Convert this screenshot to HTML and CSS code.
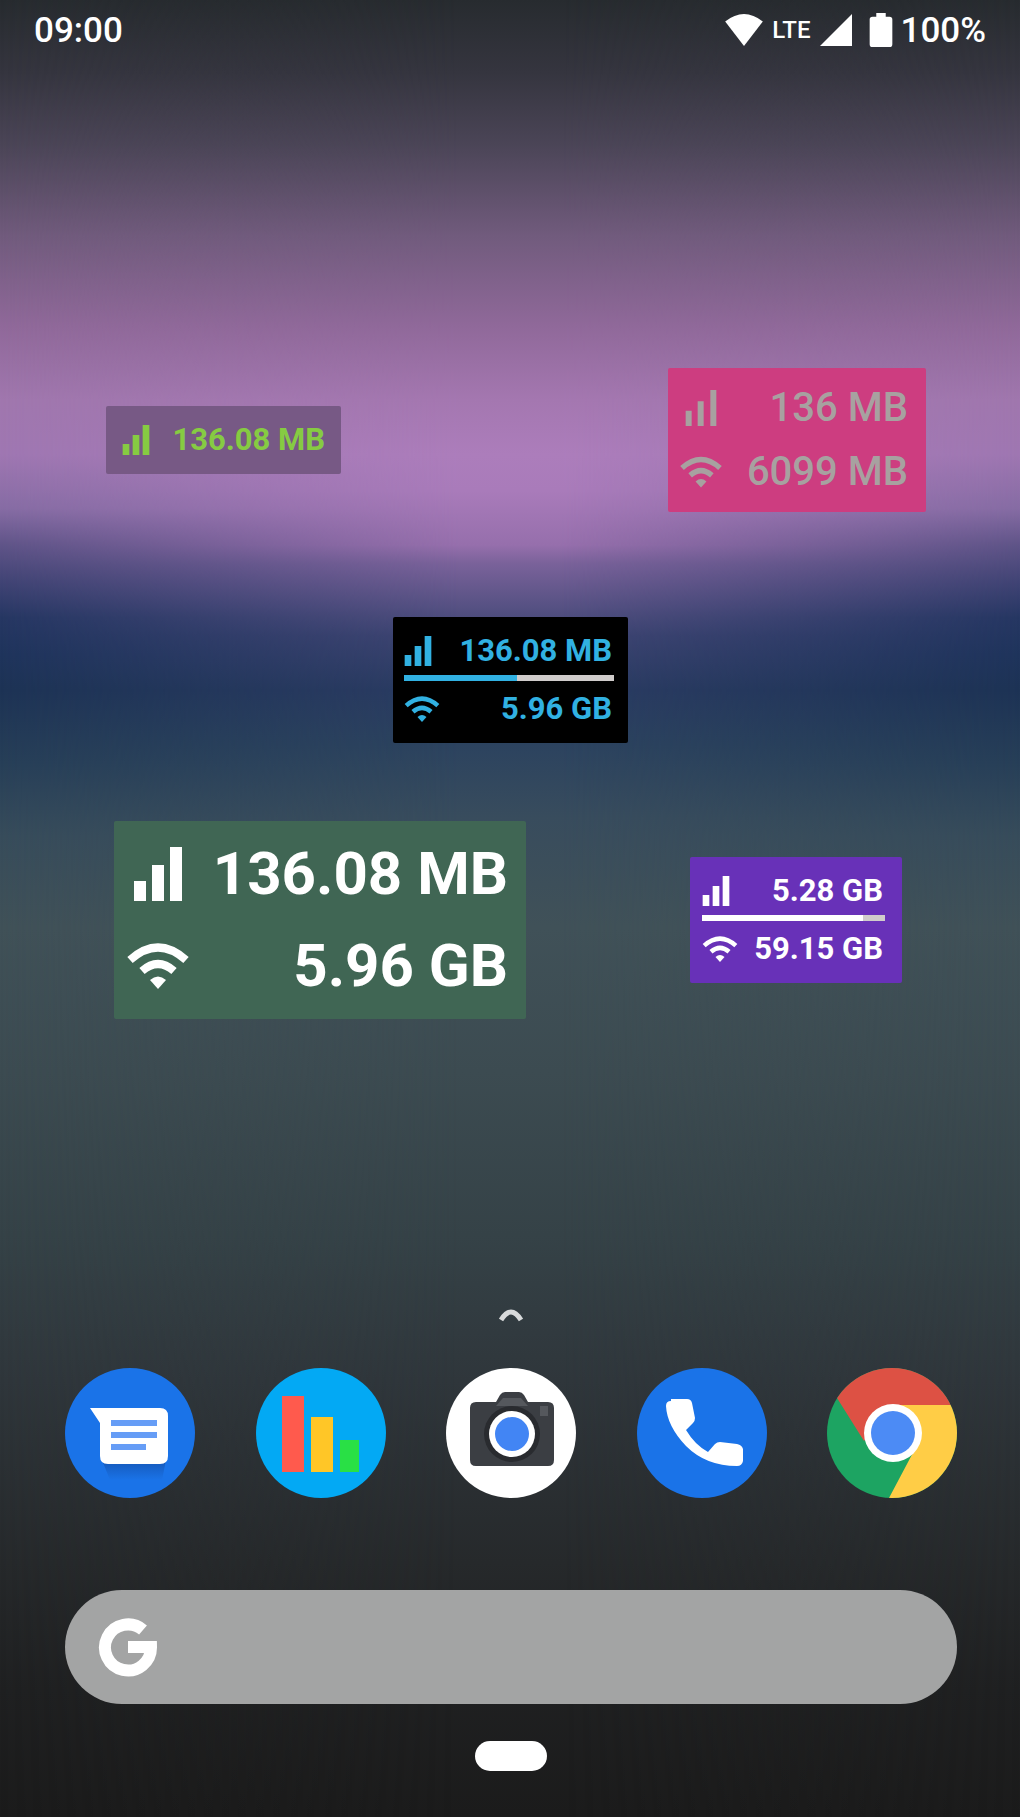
FILE: index.html
```
<!DOCTYPE html>
<html lang="en">
<head>
  <meta charset="UTF-8" />
  <meta name="viewport" content="width=device-width, initial-scale=1.0"/>
  <title>Home Screen - Data Usage Widgets</title>
  <link rel="stylesheet" href="styles.css">
</head>
<body>

  <!-- shared icons -->
  <svg class="sprite" aria-hidden="true">
    <symbol id="signal" viewBox="0 0 48 54">
      <path d="M0 34h12v20H0zM18 18h12v36H18zM36 0h12v54H36z"/>
    </symbol>
    <symbol id="signal-thin" viewBox="0 0 48 54">
      <path d="M1 31h9v23H1zM19 17h9v37h-9zM38 0h9v54h-9z"/>
    </symbol>
    <symbol id="wifi" viewBox="0 0 62 46">
      <path d="M3 17Q31-8 59 17M15 28Q31 14 47 28" fill="none" stroke="currentColor" stroke-width="8"/>
      <path d="M23 37q8-7 16 0l-8 9z"/>
    </symbol>
  </svg>

  <header class="status-bar">
    <span class="clock">09:00</span>
    <div class="status-icons">
      <svg width="40" height="32" viewBox="0 0 40 34"><path d="M0 8Q20-8 40 8L20 34z"/></svg>
      <span class="lte">LTE</span>
      <svg width="34" height="32" viewBox="0 0 34 34"><path d="M34 0v34H0z"/></svg>
      <svg class="battery" width="24" height="34" viewBox="0 0 24 36"><path d="M7 0h10v4h4q3 0 3 3v26q0 3-3 3H3q-3 0-3-3V7q0-3 3-3h4z"/></svg>
      <span class="percent">100%</span>
    </div>
  </header>

  <main class="widgets">
    <div class="widget-row row-top">
      <section class="widget small green-text">
        <div class="line"><svg class="icon"><use href="#signal"/></svg><span>136.08 MB</span></div>
      </section>
      <section class="widget medium pink">
        <div class="line"><svg class="icon"><use href="#signal-thin"/></svg><span>136 MB</span></div>
        <div class="line"><svg class="icon wifi"><use href="#wifi"/></svg><span>6099 MB</span></div>
      </section>
    </div>

    <section class="widget small black">
      <div class="line"><svg class="icon"><use href="#signal"/></svg><span>136.08 MB</span></div>
      <div class="bar"><div class="fill" style="width: 54%"></div></div>
      <div class="line"><svg class="icon wifi"><use href="#wifi"/></svg><span>5.96 GB</span></div>
    </section>

    <div class="widget-row row-bottom">
      <section class="widget large green">
        <div class="line"><svg class="icon"><use href="#signal"/></svg><span>136.08 MB</span></div>
        <div class="line"><svg class="icon wifi"><use href="#wifi"/></svg><span>5.96 GB</span></div>
      </section>
      <section class="widget small purple">
        <div class="line"><svg class="icon"><use href="#signal"/></svg><span>5.28 GB</span></div>
        <div class="bar"><div class="fill" style="width: 88%"></div></div>
        <div class="line"><svg class="icon wifi"><use href="#wifi"/></svg><span>59.15 GB</span></div>
      </section>
    </div>
  </main>

  <footer class="bottom">
    <button class="drawer" aria-label="Open app drawer">
      <svg width="24" height="16" viewBox="0 0 24 16"><path d="M2 13q5-8 10-8t10 8" fill="none" stroke="#d8dadb" stroke-width="5"/></svg>
    </button>

    <nav class="dock">
      <a href="#" aria-label="Messages">
        <svg viewBox="0 0 130 130">
          <defs>
            <linearGradient id="shade" x1="0" y1="0" x2="0" y2="1">
              <stop offset="0" stop-color="#1558b8"/>
              <stop offset="1" stop-color="#1a73e8"/>
            </linearGradient>
          </defs>
          <circle cx="65" cy="65" r="65" fill="#1a73e8"/>
          <path d="M37 92h64l-4 20H45z" fill="url(#shade)"/>
          <path d="M25 40h70q8 0 8 8v40q0 8-8 8H43q-8 0-8-8V55z" fill="#fff"/>
          <path d="M46 55h46M46 67h46M46 79h35" stroke="#669df6" stroke-width="6"/>
        </svg>
      </a>
      <a href="#" aria-label="Data usage">
        <svg viewBox="0 0 130 130">
          <circle cx="65" cy="65" r="65" fill="#03a9f4"/>
          <path d="M26 28h22v76H26z" fill="#ff5a4d"/>
          <path d="M55 49h22v55H55z" fill="#ffc627"/>
          <path d="M84 72h19v32H84z" fill="#29e045"/>
        </svg>
      </a>
      <a href="#" aria-label="Camera">
        <svg viewBox="0 0 130 130">
          <circle cx="65" cy="65" r="65" fill="#fff"/>
          <path d="M30 34h20l4-7q2-3 5-3h14q3 0 5 3l4 7h20q6 0 6 6v52q0 6-6 6H30q-6 0-6-6V40q0-6 6-6z" fill="#3b3e43"/>
          <path d="M50 38l7-8h18l7 8M94 38h8v10h-8z" fill="#55585d"/>
          <circle cx="66" cy="66" r="28" fill="#292b2f"/>
          <circle cx="66" cy="66" r="23" fill="#fff"/>
          <circle cx="66" cy="66" r="17" fill="#4285f4"/>
        </svg>
      </a>
      <a href="#" aria-label="Phone">
        <svg viewBox="0 0 130 130">
          <circle cx="65" cy="65" r="65" fill="#1a73e8"/>
          <path d="M34 31h16q4 0 5 4l3 15q0 3-2 5l-7 7q9 15 22 22l7-8q2-2 5-2l17 2q5 1 6 5v12q-1 5-6 5-31 0-51-20-19-20-20-40 0-5 5-5z" fill="#fff"/>
        </svg>
      </a>
      <a href="#" aria-label="Chrome">
        <svg viewBox="0 0 130 130">
          <clipPath id="round"><circle cx="65" cy="65" r="65"/></clipPath>
          <g clip-path="url(#round)">
            <path d="M0 0h130v130H0z" fill="#1da462"/>
            <path d="M65 37H130V130H62L89 79z" fill="#ffcd46"/>
            <path d="M0 14V0H130V37H66L37 73z" fill="#dd5144"/>
          </g>
          <circle cx="66" cy="65" r="29" fill="#fff"/>
          <circle cx="66" cy="65" r="22" fill="#4c8bf5"/>
        </svg>
      </a>
    </nav>

    <form class="search">
      <svg width="60" height="60" viewBox="0 0 60 60" aria-hidden="true"><path d="M45 13A23 23 0 1 0 53 30H30" fill="none" stroke="#fff" stroke-width="12"/></svg>
      <input type="text" aria-label="Search">
    </form>

    <button class="home" aria-label="Home"></button>
  </footer>

</body>
</html>
```

FILE: styles.css
```
* {
  box-sizing: border-box;
}

body {
  margin: 0;
  min-height: 100vh;
  display: flex;
  flex-direction: column;
  position: relative;
  isolation: isolate;
  font-family: Roboto, sans-serif;
  color: #fff;
  background: linear-gradient(to bottom,
    #272b2f 0%, #35353f 4%, #4b4557 8%, #715b7d 13%, #90699a 18%,
    #a077ae 22%, #9f77b2 25%, #866ca4 28%, #5f5488 30%, #414475 32%,
    #263763 34%, #1f345c 36%, #1d3355 38%, #273f58 42%, #374c5b 46%,
    #405158 51%, #3c4b51 59%, #354247 68%, #2f363b 76%, #26292b 86%,
    #1f2021 93%, #1b1b1b 100%);
}

/* the middle of the wallpaper is brighter and its bands sit lower */
body::before {
  content: "";
  position: absolute;
  inset: 0;
  z-index: -1;
  background: linear-gradient(to bottom,
    #272b2f 0%, #35353f 4%, #4b4557 8%, #715b7d 13%, #90699a 18%,
    #a477b0 22%, #ac7dbb 25%, #a97bba 27%, #966fac 30%, #7a629a 31%,
    #5c5487 33%, #3f4573 35%, #2b3c63 38%, #2c435f 41%, #384c5d 45%,
    #405158 51%, #3c4b51 59%, #354247 68%, #2f363b 76%, #26292b 86%,
    #1f2021 93%, #1b1b1b 100%);
  -webkit-mask-image: linear-gradient(to right, transparent, #000 45%, #000 55%, transparent);
  mask-image: linear-gradient(to right, transparent, #000 45%, #000 55%, transparent);
}

svg {
  fill: currentColor;
  flex: none;
}

.sprite {
  position: absolute;
  width: 0;
  height: 0;
}

.status-bar {
  display: flex;
  justify-content: space-between;
  align-items: center;
  height: 64px;
  padding: 0 34px 4px;
  font-size: 35px;
  font-weight: 500;
}

.status-icons {
  display: flex;
  align-items: center;
  gap: 8px;
}

.lte {
  font-size: 24px;
}

.battery {
  margin-left: 8px;
}

/* widgets */
.widgets {
  padding: 304px 94px 0 106px;
}

.widget-row {
  display: flex;
  justify-content: space-between;
  align-items: center;
}

.row-bottom {
  margin-top: 78px;
  padding: 0 24px 0 8px;
}

.widget {
  display: flex;
  flex-direction: column;
  border-radius: 2px;
}

.line {
  display: flex;
  justify-content: space-between;
  align-items: center;
}

.small {
  width: 235px;
  padding: 16px;
  font-size: 31px;
  line-height: 36px;
  font-weight: 700;
}

.small .icon {
  width: 28px;
  height: 30px;
}

.small .wifi {
  width: 36px;
  height: 26px;
}

.medium {
  width: 258px;
  padding: 16px 18px 16px 12px;
  gap: 16px;
  font-size: 40px;
  line-height: 48px;
  font-weight: 500;
}

.medium .icon {
  width: 32px;
  height: 36px;
  margin-left: 5px;
}

.medium .wifi {
  width: 42px;
  height: 32px;
  margin-left: 0;
}

.large {
  width: 412px;
  padding: 18px 18px 18px 13px;
  gap: 22px;
  font-size: 60px;
  line-height: 70px;
  font-weight: 700;
}

.large .icon {
  width: 48px;
  height: 54px;
  margin-left: 7px;
}

.large .wifi {
  width: 62px;
  height: 46px;
  margin-left: 0;
}

.green-text {
  background-color: #775985;
  color: #86cb42;
}

.pink {
  background-color: #cd3d80;
  color: #a7a1a0;
}

.black {
  margin: 105px auto 0 287px;
  padding: 16px 14px 16px 11px;
  background-color: #000;
  color: #31b1e2;
}

.green {
  background-color: #406654;
}

.purple {
  width: 212px;
  padding: 16px 17px 16px 12px;
  background-color: #6831b8;
}

.black span,
.purple span {
  margin-right: 2px;
}

.bar {
  height: 6px;
  margin: 6px 0 10px;
  background-color: #d0cccb;
}

.fill {
  height: 100%;
  background-color: currentColor;
}

/* dock and search */
.bottom {
  display: flex;
  flex-direction: column;
  margin-top: auto;
  padding: 0 63px 46px 65px;
}

button {
  border: none;
  padding: 0;
  background: none;
  cursor: pointer;
}

.drawer {
  align-self: center;
  display: flex;
  margin-bottom: 45px;
}

.dock {
  display: flex;
  justify-content: space-between;
}

.dock a {
  width: 130px;
  height: 130px;
}

.dock svg {
  display: block;
  width: 100%;
  height: 100%;
}

.search {
  display: flex;
  align-items: center;
  height: 114px;
  margin-top: 92px;
  padding: 0 33px;
  gap: 20px;
  border-radius: 57px;
  background-color: #a3a4a4;
}

.search input {
  flex: 1;
  height: 60px;
  border: none;
  outline: none;
  background: none;
  font-size: 36px;
  color: #fff;
}

.home {
  align-self: center;
  width: 72px;
  height: 30px;
  margin-top: 37px;
  border-radius: 15px;
  background-color: #fff;
}
```
